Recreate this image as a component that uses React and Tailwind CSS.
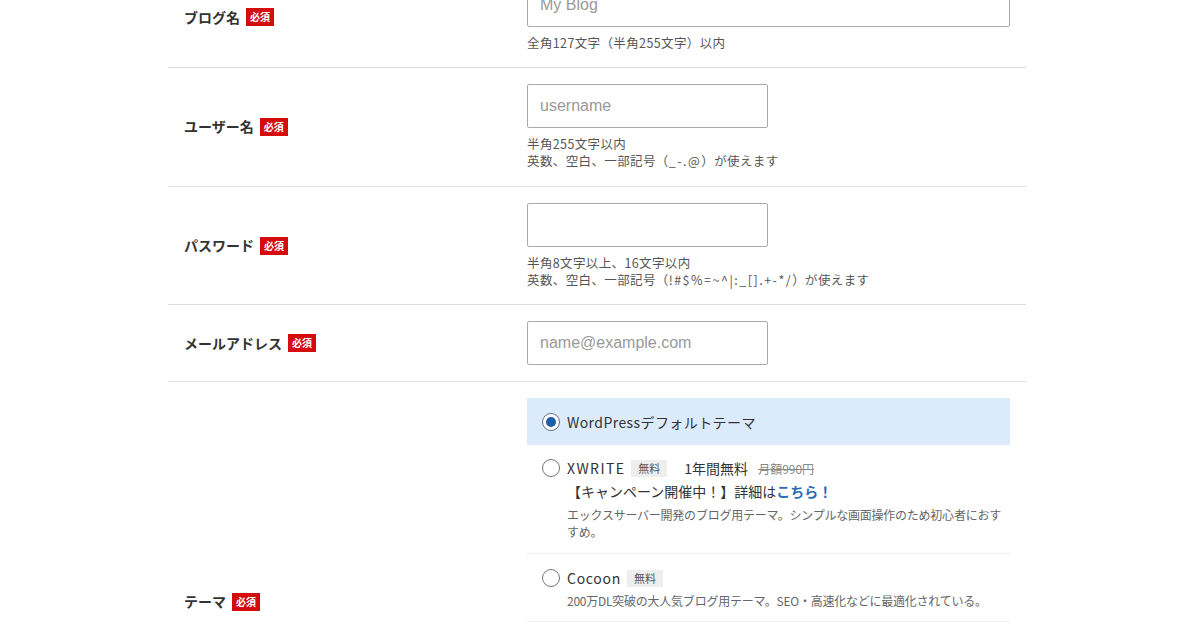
import React from 'react';

const jp = { fontFamily: '"Noto Sans CJK JP", "Noto Sans", sans-serif' };
const latin = { fontFamily: '"Liberation Sans", "Noto Sans CJK JP", sans-serif' };

function Required() {
  return (
    <span className="inline-flex h-[18px] items-center bg-[#d40c0c] px-[4px] text-[10px] font-bold leading-none text-white">必須</span>
  );
}

function Row({ label, children, className = '' }) {
  return (
    <div className={`flex border-b border-[#dddddd] ${className}`}>
      <div className="flex w-[359px] shrink-0 items-center gap-[6px] pl-4">
        <span className="text-[14px] font-bold text-[#333333]">{label}</span>
        <Required />
      </div>
      <div className="w-[483px] pt-4 pb-4">{children}</div>
    </div>
  );
}

function TextInput({ placeholder, wide }) {
  return (
    <input
      type="text"
      placeholder={placeholder}
      style={latin}
      className={`block h-[44px] ${wide ? 'w-full' : 'w-[241px]'} rounded-[2px] border border-[#aaaaaa] bg-white px-[12px] text-[16px] text-[#333] placeholder:text-[#999999] outline-none`}
    />
  );
}

function Help({ children }) {
  return <div className="mt-[7px] text-[12.5px] leading-[17px] tracking-[0.03em] text-[#555555]">{children}</div>;
}

function Radio({ checked }) {
  return (
    <span className={`mt-[2px] flex h-[18px] w-[18px] shrink-0 items-center justify-center rounded-full border ${checked ? 'border-[#5f6f80]' : 'border-[#777777]'} bg-white`}>
      {checked && <span className="h-[10px] w-[10px] rounded-full bg-[#1d5fa8]" />}
    </span>
  );
}

function Free() {
  return <span className="ml-[6px] inline-block bg-[#eeeeee] px-[7px] text-[11px] leading-[17px] text-[#555555] align-[1px]">無料</span>;
}

export default function App() {
  return (
    <div className="min-h-[630px] overflow-hidden bg-white" style={jp}>
      <div className="ml-[168px] mt-[-33px] w-[858px]">
        <Row label="ブログ名">
          <TextInput placeholder="My Blog" wide />
          <Help>全角127文字（半角255文字）以内</Help>
        </Row>
        <Row label="ユーザー名" className="pb-px">
          <TextInput placeholder="username" />
          <Help>
            <div>半角255文字以内</div>
            <div>英数、空白、一部記号（<span className="tracking-[0.12em]">_-.@</span>）が使えます</div>
          </Help>
        </Row>
        <Row label="パスワード">
          <TextInput placeholder="" />
          <Help>
            <div>半角8文字以上、16文字以内</div>
            <div>英数、空白、一部記号（<span className="tracking-[0.12em]">!#$%=~^|:_[].+-*/</span>）が使えます</div>
          </Help>
        </Row>
        <Row label="メールアドレス">
          <TextInput placeholder="name@example.com" />
        </Row>
        <Row label="テーマ" className="min-h-[440px]">
          <div className="flex gap-[7px] bg-[#dcebfb] pl-[15px] pr-1 py-[12.5px]">
            <Radio checked />
            <div className="text-[14px] leading-[22px] tracking-[0.03em] text-[#333333]">WordPressデフォルトテーマ</div>
          </div>
          <div className="flex gap-[7px] border-b border-[#eeeeee] pl-[15px] pr-1 pt-3 pb-[13px]">
            <Radio />
            <div className="flex-1">
              <div className="text-[14px] leading-[22px] text-[#333333]">
                <span className="tracking-[0.1em]">XWRITE</span>
                <Free />
                <span className="ml-[17px]">1年間無料</span>
                <span className="ml-[10px] text-[12px] text-[#888888] line-through">月額990円</span>
              </div>
              <div className="text-[14px] leading-[22px] text-[#333333]">
                【キャンペーン開催中！】詳細は<span className="font-bold text-[#2b6cb8]">こちら！</span>
              </div>
              <div className="mt-[4px] text-[12px] leading-[17px] tracking-[-0.02em] text-[#666666]">
                エックスサーバー開発のブログ用テーマ。シンプルな画面操作のため初心者におすすめ。
              </div>
            </div>
          </div>
          <div className="flex gap-[7px] border-b border-[#eeeeee] pl-[15px] pr-1 pt-[13px] pb-[12px]">
            <Radio />
            <div className="flex-1">
              <div className="text-[14px] leading-[22px] text-[#333333]">
                <span className="tracking-[0.05em]">Cocoon</span>
                <Free />
              </div>
              <div className="mt-[3px] text-[12px] leading-[17px] tracking-[-0.02em] text-[#666666]">
                200万DL突破の大人気ブログ用テーマ。SEO・高速化などに最適化されている。
              </div>
            </div>
          </div>
        </Row>
      </div>
    </div>
  );
}
